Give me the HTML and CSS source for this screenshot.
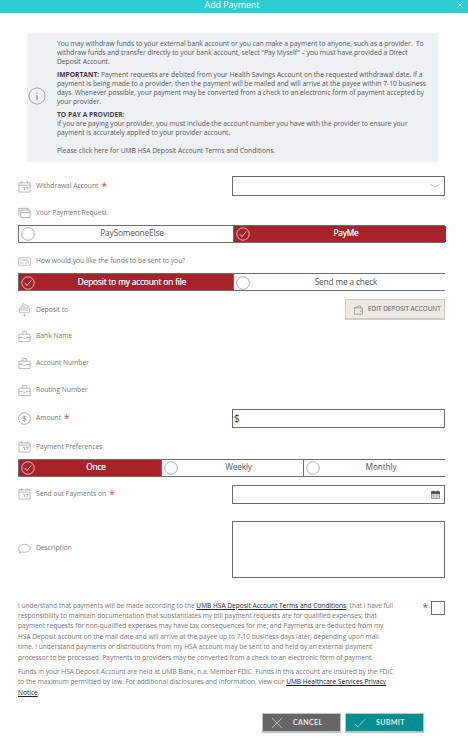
FILE: index.html
```html
<!DOCTYPE html>
<html lang="en">
<head>
<meta charset="utf-8">
<title>Add Payment</title>
<link rel="stylesheet" href="styles.css">
</head>
<body>
<svg class="defs" width="0" height="0" aria-hidden="true">
  <symbol id="cal" viewBox="0 0 14 14"><path d="M1 3h12v10H1zM1 5.500h12M4 1v3M10 1v3" fill="none" stroke="#a9a49c" stroke-width=".8"/><path d="M5.500 8H7v3M8.500 8H11L9.500 11" fill="none" stroke="#8a8a8a" stroke-width=".7"/></symbol>
  <symbol id="brief" viewBox="0 0 14 14"><path d="M1 4.500h12v8H1zM5 4.500V1.500h4v3M1 8h4M9 8h4M5 8l1 1h2l1-1" fill="none" stroke="#a5a29c" stroke-width=".8"/></symbol>
  <symbol id="radio" viewBox="0 0 14 14"><circle cx="7" cy="7" r="6.300" fill="#fff" stroke="#8b8b96" stroke-width=".7"/></symbol>
  <symbol id="radio-on" viewBox="0 0 14 14"><circle cx="7" cy="7" r="6.200" fill="none" stroke="#f3dcd8" stroke-width=".8"/><path d="M3.800 7.200l2.200 2.300 4.300-5" fill="none" stroke="#f7e9e6" stroke-width=".9"/></symbol>
</svg>

<header class="topbar">
  <h1 class="title">Add Payment</h1>
  <svg class="close" viewBox="0 0 6 6"><path d="M.5.500l5 5M5.500.500l-5 5" fill="none" stroke="#fff" stroke-width="1"/></svg>
</header>

<section class="info">
  <svg class="info-icon" viewBox="0 0 20 20"><circle cx="10" cy="10" r="9" fill="none" stroke="#9b9486" stroke-width=".9"/><path d="M10 6v1M10 9v5.500" stroke="#555" stroke-width="1"/></svg>
  <div class="info-text">
    <p>You may withdraw funds to your external bank account or you can make a payment to anyone, such as a provider.&nbsp; To withdraw funds and transfer directly to your bank account, select "Pay Myself" – you must have provided a Direct Deposit Account.</p>
    <p><b class="important">IMPORTANT:</b> Payment requests are debited from your Health Savings Account on the requested withdrawal date. If a payment is being made to a provider, then the payment will be mailed and will arrive at the payee within 7-10 business days. Whenever possible, your payment may be converted from a check to an electronic form of payment accepted by your provider.</p>
    <p class="gap"><b>TO PAY A PROVIDER:</b><br>If you are paying your provider, you must include the account number you have with the provider to ensure your payment is accurately applied to your provider account.</p>
    <p>Please click here for UMB HSA Deposit Account Terms and Conditions.</p>
  </div>
</section>

<main class="form">
  <div class="row row-withdrawal">
    <div class="label"><svg class="ic"><use href="#cal"/></svg><span>Withdrawal Account</span><i class="req">*</i></div>
    <div class="field select"><svg class="chev" viewBox="0 0 10 4"><path d="M.5.500L5 3 9.500.500" fill="none" stroke="#999" stroke-width=".7"/></svg></div>
  </div>

  <div class="label solo s-request"><svg class="ic" viewBox="0 0 14 14"><path d="M3 4.500h10v8H3zM3 7h10M1 10.500V2.500h10v2" fill="none" stroke="#a5a29c" stroke-width=".9"/></svg><span>Your Payment Request</span></div>
  <div class="toggle">
    <div class="opt"><svg class="radio"><use href="#radio"/></svg><span>PaySomeoneElse</span></div>
    <div class="opt on"><svg class="radio"><use href="#radio-on"/></svg><span>PayMe</span></div>
  </div>

  <div class="label solo s-funds"><svg class="ic" viewBox="0 0 14 14"><path d="M.500 3h13v8H.500zM2 8.500h4M7.500 8.500H10M11 6v3M2 5.500h9" fill="none" stroke="#a5a29c" stroke-width=".7"/></svg><span>How would you like the funds to be sent to you?</span></div>
  <div class="toggle">
    <div class="opt on"><svg class="radio"><use href="#radio-on"/></svg><span>Deposit to my account on file</span></div>
    <div class="opt"><svg class="radio"><use href="#radio"/></svg><span>Send me a check</span></div>
  </div>

  <div class="row row-deposit">
    <div class="label"><svg class="ic ic-tall" viewBox="0 0 14 16"><path d="M1.500 6.500h11v5h-11zM1.500 8.500h11M3 6.500L5 1.500l6 3-1 2M7 12v3M5.500 13.800L7 15.300l1.500-1.500M5 3l4 3M4.500 4.500l2.500 2" fill="none" stroke="#a5a29c" stroke-width=".7"/></svg><span>Deposit to</span></div>
    <button class="edit" type="button"><svg class="edit-ic" viewBox="0 0 14 14"><path d="M2 5l7-3 1 3M2 5h10v8H2zM9 9h3" fill="none" stroke="#8a8478" stroke-width=".9"/></svg>EDIT DEPOSIT ACCOUNT</button>
  </div>

  <div class="label solo s-bank"><svg class="ic"><use href="#brief"/></svg><span>Bank Name</span></div>
  <div class="label solo s-acct"><svg class="ic"><use href="#brief"/></svg><span>Account Number</span></div>
  <div class="label solo s-acct"><svg class="ic"><use href="#brief"/></svg><span>Routing Number</span></div>

  <div class="row row-amount">
    <div class="label"><svg class="ic" viewBox="0 0 14 14"><circle cx="7" cy="7" r="6.300" fill="none" stroke="#9b9486" stroke-width=".8"/></svg><span class="dollar">$</span><span>Amount</span><i class="req">*</i></div>
    <div class="field amount">$</div>
  </div>

  <div class="label solo s-pref"><svg class="ic"><use href="#cal"/></svg><span>Payment Preferences</span></div>
  <div class="toggle three">
    <div class="opt on"><svg class="radio"><use href="#radio-on"/></svg><span>Once</span></div>
    <div class="opt"><svg class="radio"><use href="#radio"/></svg><span>Weekly</span></div>
    <div class="opt"><svg class="radio"><use href="#radio"/></svg><span>Monthly</span></div>
  </div>

  <div class="row row-send">
    <div class="label"><svg class="ic"><use href="#cal"/></svg><span>Send out Payments on</span><i class="req">*</i></div>
    <div class="field date"><svg class="date-ic" viewBox="0 0 10 10"><path d="M.5 2h9v7.500h-9z" fill="#dfe3ea" stroke="#6d6a64" stroke-width=".7"/><path d="M.5 2h9v2h-9zM2.500.500v2M7.500.500v2" fill="#55504a" stroke="#45403a" stroke-width=".8"/><path d="M3.500 4v5.500M6.500 4v5.500M.5 6.500h9" stroke="#8d92a0" stroke-width=".5"/></svg></div>
  </div>

  <div class="row row-desc">
    <div class="label"><svg class="ic" viewBox="0 0 14 14"><path d="M7 2.500c3.300 0 6.300 1.500 6.300 4.200S10.300 11 7 11c-1 0-2 0-2.800-.3L1.500 12.500l.8-2.500C1.200 9 .7 8 .7 6.700.7 4 3.700 2.500 7 2.500z" fill="none" stroke="#9b9486" stroke-width=".7"/></svg><span>Description</span></div>
    <div class="field area"></div>
  </div>

  <div class="legal">
    <div class="legal-text">
      <p>I understand that payments will be made according to the <a>UMB HSA Deposit Account Terms and Conditions</a>; that I have full responsibility to maintain documentation that substantiates my bill payment requests are for qualified expenses; that payment requests for non-qualified expenses may have tax consequences for me; and Payments are deducted from my HSA Deposit account on the mail date and will arrive at the payee up to 7-10 business days later, depending upon mail time. I understand payments or distributions from my HSA account may be sent to and held by an external payment processor to be processed. Payments to providers may be converted from a check to an electronic form of payment.</p>
      <p>Funds in your HSA Deposit Account are held at UMB Bank, n.a. Member FDIC. Funds in this account are insured by the FDIC to the maximum permitted by law. For additional disclosures and information, view our <a>UMB Healthcare Services Privacy Notice</a>.</p>
    </div>
    <div class="agree"><i class="req">*</i><span class="check"></span></div>
  </div>

  <div class="actions">
    <button class="btn cancel" type="button"><svg class="btn-ic" viewBox="0 0 12 12"><path d="M1 1l10 10M11 1L1 11" fill="none" stroke="#e4e4e4" stroke-width=".7"/></svg>CANCEL</button>
    <button class="btn submit" type="button"><svg class="btn-ic" viewBox="0 0 14 12"><path d="M1 7l3.500 3.500L13 1.500" fill="none" stroke="#e4f3f3" stroke-width=".7"/></svg>SUBMIT</button>
  </div>
</main>
</body>
</html>
```
FILE: styles.css
```css
* { box-sizing: border-box; }
html, body { margin: 0; padding: 0; }
body { width: 468px; height: 742px; overflow: hidden; background: #fff; font-family: "Open Sans", sans-serif; color: #666; }
.defs { position: absolute; }
.topbar { height: 13px; background: #2bcdd3; display: flex; justify-content: center; align-items: flex-start; position: relative; padding-right: 4px; }
.title { margin: 0; font-size: 8.800px; font-weight: 400; color: #fff; line-height: 10px; }
.close { position: absolute; right: 5px; top: 2px; width: 6px; height: 6px; }
.info { margin: 20px 30px 0 27px; height: 129px; background: #eff2f5; display: flex; align-items: flex-start; }
.info-icon { width: 18px; height: 18px; margin: 54px 0 0 1px; flex: none; }
.info-text { padding: 5.500px 8px 0 11px; font-size: 6.700px; line-height: 9px; color: #555; flex: 1; }
.info-text p { margin: 0 0 4px; }
.info-text .gap { margin-bottom: 9px; }
.info-text b { color: #444; }
.important { color: #4a2a4a !important; }
.form { padding: 0 23px 0 18px; }
.row { display: flex; justify-content: space-between; align-items: center; }
.label { display: flex; align-items: center; font-size: 6.700px; color: #777; line-height: 12px; position: relative; }
.ic { width: 13px; height: 13px; margin-right: 5px; flex: none; }
.ic-tall { height: 15px; }
.dollar { position: absolute; left: 4px; top: 0; font-size: 8px; color: #777; }
.req { font-style: normal; color: #c0443f; font-size: 10px; line-height: 8px; margin-left: 3px; height: 8px; }
.field { width: 213px; border: 1px solid #6c6c6c; background: #fff; position: relative; }
.row-withdrawal { margin-top: 14px; }
.select { height: 20px; }
.chev { position: absolute; right: 4px; top: 7px; width: 10px; height: 4px; }
.solo { height: 13px; }
.s-request { margin-top: 10px; }
.s-funds { margin-top: 12px; }
.toggle { display: grid; grid-template-columns: 214px 213px; height: 18px; border: 1px solid #6c6c6c; margin-top: 5.500px; }
.toggle.three { grid-template-columns: 142px 142px 143px; }
.opt { display: flex; align-items: center; justify-content: center; position: relative; font-size: 8.300px; letter-spacing: -.15px; color: #555; background: #fff; border-left: 1px solid #6c6c6c; padding: 0 0 2px 12px; }
.opt:first-child { border-left: 0; }
.opt.on { background: #a8222a; color: #fff; font-weight: 400; text-shadow: 0 0 .4px #fff; }
.radio { position: absolute; left: 2px; top: 1.500px; width: 14px; height: 14px; }
.row-deposit { margin-top: 8px; height: 21px; }
.edit { width: 100px; height: 21px; background: #ece8e2; border: 1px solid #cfccc6; border-bottom-width: 2px; color: #555; font: 400 6.400px/1 "Open Sans", sans-serif; display: flex; align-items: center; padding: 0 0 0 7px; white-space: nowrap; }
.edit-ic { width: 11px; height: 11px; margin-right: 4px; flex: none; }
.s-bank { margin-top: 9.500px; }
.s-acct { margin-top: 14px; }
.row-amount { margin-top: 12px; }
.amount { height: 19px; font-size: 10px; line-height: 17px; padding-left: 1px; color: #333; }
.s-pref { margin-top: 12.500px; }
.row-send { margin-top: 8px; }
.row-send .label { margin-top: -1px; }
.date { height: 19px; }
.date-ic { position: absolute; right: 4px; top: 4px; width: 9px; height: 9px; }
.row-desc { margin-top: 17px; }
.row-desc .label { margin-top: -2px; }
.area { height: 57px; }
.legal { display: flex; justify-content: space-between; margin-top: 23px; }
.legal-text { width: 377px; font-size: 6.570px; line-height: 10.400px; color: #777; }
.legal-text p { margin: 0 0 4px; }
.legal-text a { color: #222; text-decoration: underline; }
.agree { display: flex; align-items: flex-start; }
.agree .req { margin: 2px 3px 0 0; }
.check { display: block; width: 14px; height: 14px; border: 1px solid #6c6c6c; }
.actions { display: flex; gap: 4px; margin: 11px 21px 0 244px; }
.btn { width: 79px; height: 20px; border: 1px solid #bdc4c4; border-bottom-width: 2px; display: flex; align-items: center; padding: 0 0 0 8px; color: #e8ecec; font: 700 7px/1 Lato, sans-serif; letter-spacing: .4px; white-space: nowrap; }
.cancel { background: #666; }
.submit { background: #008f91; }
.btn-ic { width: 12px; height: 12px; margin-right: 10px; flex: none; }
```
